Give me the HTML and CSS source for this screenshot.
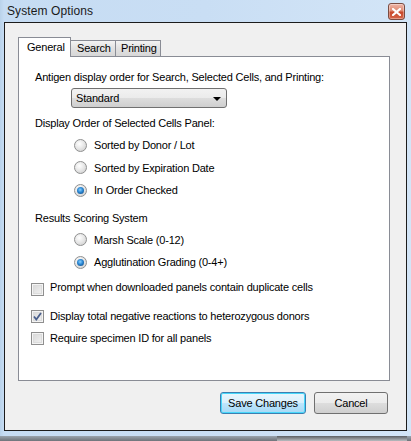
FILE: index.html
```html
<!DOCTYPE html>
<html>
<head>
<meta charset="utf-8">
<link rel="stylesheet" href="styles.css">
</head>
<body>
<div class="screen">
  <div class="titlebar">
    <span class="title">System Options</span>
    <span class="close"><svg width="9" height="8" viewBox="0 0 9 8"><path d="M1 1 L8 7 M8 1 L1 7" stroke="#fff" stroke-width="2.2" stroke-linecap="square"/></svg></span>
  </div>
  <div class="client">
    <div class="tabs">
      <div class="tab selected">General</div>
      <div class="tab">Search</div>
      <div class="tab">Printing</div>
    </div>
    <div class="panel">
      <div class="label first">Antigen display order for Search, Selected Cells, and Printing:</div>
      <div class="combo"><span>Standard</span><span class="arrow"></span></div>
      <div class="label l2">Display Order of Selected Cells Panel:</div>
      <div class="radio r1"><span class="dot"></span><span>Sorted by Donor / Lot</span></div>
      <div class="radio r2"><span class="dot"></span><span>Sorted by Expiration Date</span></div>
      <div class="radio r3"><span class="dot on"></span><span>In Order Checked</span></div>
      <div class="label l3">Results Scoring System</div>
      <div class="radio r4"><span class="dot"></span><span>Marsh Scale (0-12)</span></div>
      <div class="radio r5"><span class="dot on"></span><span>Agglutination Grading (0-4+)</span></div>
      <div class="check c1"><span class="box"></span><span>Prompt when downloaded panels contain duplicate cells</span></div>
      <div class="check c2"><span class="box"><svg width="11" height="11" viewBox="0 0 11 11"><path d="M2 5.5 L4.3 8.5 L9 2" fill="none" stroke="#4a5f8c" stroke-width="1.8"/></svg></span><span>Display total negative reactions to heterozygous donors</span></div>
      <div class="check c3"><span class="box"></span><span>Require specimen ID for all panels</span></div>
    </div>
    <div class="buttons">
      <div class="btn default">Save Changes</div>
      <div class="btn cancel">Cancel</div>
    </div>
  </div>
  <div class="frame-bottom"></div>
  <div class="shadow"><div class="shadow-inner"></div></div>
</div>
</body>
</html>
```
FILE: styles.css
```css
html, body { margin: 0; padding: 0; }
body { font-family: "Liberation Sans", Arial, sans-serif; font-size: 11px; color: #000; background: #fff; }
.screen { width: 411px; height: 441px; display: flex; flex-direction: column; background: linear-gradient(90deg, #b9d2ea 0, #c6dcf3 4px, #c9def4 50%, #d3e5f7 100%); overflow: hidden; }
.titlebar { height: 22px; flex: none; display: flex; align-items: flex-start; padding-left: 7px; padding-right: 6px; box-sizing: border-box; }
.title { font-size: 12px; color: #1a1a1a; margin-top: 4px; flex: 1; letter-spacing: 0.1px; }
.close { width: 15px; height: 15px; margin-top: 3px; border: 1px solid #7a4c42; border-radius: 3px; background: linear-gradient(#efb5a7 0, #de8a72 45%, #c8482b 55%, #d6674a 100%); display: flex; align-items: center; justify-content: center; box-shadow: inset 0 0 0 1px rgba(255,255,255,0.35); }
.client { height: 409px; flex: none; margin: 0 4px; border: 1px solid #1c1c1c; background: #f0f0f0; box-sizing: border-box; padding: 14px 16px 0 13px; display: flex; flex-direction: column; letter-spacing: -0.2px; }
.tabs { display: flex; align-items: flex-end; height: 19px; position: relative; z-index: 1; }
.tab { height: 16px; box-sizing: border-box; border: 1px solid #898c95; border-bottom: none; border-left: none; background: linear-gradient(#f3f3f3, #e1e1e1 50%, #d7d7d7); padding: 0 0 0 6px; line-height: 15px; font-size: 11px; }
.tab.selected { height: 20px; margin-bottom: -1px; background: #fff; border-left: 1px solid #898c95; padding: 2px 0 0 8px; line-height: 15px; width: 53px; }
.tab:nth-child(2) { width: 45px; }
.tab:nth-child(3) { width: 45px; padding-left: 5px; }
.panel { width: 372px; height: 325px; box-sizing: border-box; border: 1px solid #898c95; background: #fff; padding: 0 0 0 16px; display: flex; flex-direction: column; }
.label { height: 16px; line-height: 16px; white-space: nowrap; }
.label.first { margin-top: 12px; }
.combo { margin: 3px 0 0 36px; width: 156px; height: 20px; box-sizing: border-box; border: 1px solid #707070; border-radius: 3px; background: linear-gradient(#f2f2f2, #ebebeb 50%, #dddddd 51%, #cfcfcf); display: flex; align-items: center; justify-content: space-between; padding: 0 5px 0 4px; }
.arrow { width: 0; height: 0; border-left: 4px solid transparent; border-right: 4px solid transparent; border-top: 4px solid #000; margin-top: 1px; }
.label.l2 { margin-top: 7px; }
.radio { display: flex; align-items: center; height: 22px; padding-left: 39px; gap: 7px; white-space: nowrap; }
.r1 { margin-top: 3px; }
.r2 { height: 23px; }
.label.l3 { margin-top: 9px; }
.r4 { margin-top: 2px; height: 23px; }
.dot { width: 13px; height: 13px; box-sizing: border-box; border-radius: 50%; border: 1px solid #8f9090; background: radial-gradient(circle at 40% 35%, #ffffff 0, #e8e8e8 45%, #c9c9c9 100%); position: relative; flex: none; }
.dot.on::after { content: ""; position: absolute; left: 2px; top: 2px; width: 7px; height: 7px; border-radius: 50%; background: radial-gradient(circle at 45% 40%, #8ad0ff 0, #2a86d2 45%, #0b3d72 100%); }
.check { display: flex; align-items: center; height: 22px; gap: 6px; white-space: nowrap; margin-left: -4px; }
.c1 { margin-top: 5px; height: 27px; align-items: flex-start; }
.c1 .box { margin-top: 5px; }
.c1 span:last-child { margin-top: 3px; }
.box { width: 13px; height: 13px; box-sizing: border-box; border: 1px solid #8f8f8f; background: linear-gradient(135deg, #d6d6d6, #f4f4f4); box-shadow: inset 0 0 0 1px #f4f4f4, inset 0 0 0 2px #dcdcdc; flex: none; display: flex; align-items: center; justify-content: center; }
.buttons { display: flex; justify-content: flex-end; gap: 8px; margin-top: 11px; padding-right: 2px; width: 372px; box-sizing: border-box; }
.btn { height: 22px; box-sizing: border-box; border: 1px solid #707070; border-radius: 3px; background: linear-gradient(#f2f2f2, #ebebeb 50%, #dddddd 51%, #cfcfcf); display: flex; align-items: center; justify-content: center; font-size: 11px; }
.btn.default { width: 86px; border-color: #3c7fb1; box-shadow: inset 0 0 0 1px #48d8fb; background: linear-gradient(#eaf6fd, #d9f0fc 50%, #bee6fd 51%, #a7d9f5); }
.btn.cancel { width: 74px; }
.frame-bottom { height: 5px; flex: none; }
.shadow { height: 5px; flex: none; background: linear-gradient(#9aa3ad, #6f747a); display: flex; justify-content: flex-end; }
.shadow-inner { width: 130px; margin-right: 4px; background: linear-gradient(#5c5f63, #b8bcc0); }
```
